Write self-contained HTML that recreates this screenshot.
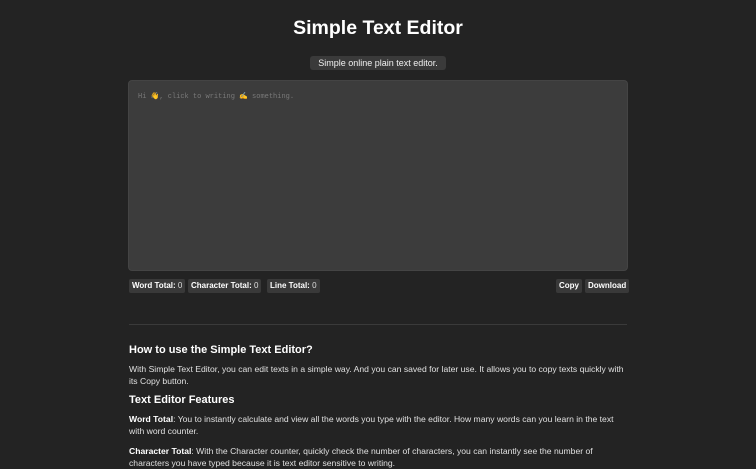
<!DOCTYPE html>
<html><head><style>
body{margin:0;background:#232323;color:#e6e6e6;font-family:"Liberation Sans",sans-serif;width:756px;height:462px;overflow:hidden;position:relative}
.a{position:absolute}
h1{position:absolute;top:17px;left:0;width:756px;text-align:center;margin:0;font-size:19.5px;font-weight:bold;color:#fff}
.sub{left:310px;top:56px;width:136px;height:14px;background:#3a3a3a;border-radius:3px;font-size:9px;text-align:center;line-height:14px;color:#f0f0f0}
.ta{left:129px;top:81px;width:498px;height:189px;background:#3c3c3c;border-radius:3px;box-shadow:0 0 0 1px #444}
.ph{left:138px;top:92px;font-family:"Liberation Mono",monospace;font-size:7px;color:#7a7a7a}
.b{top:279px;height:14px;background:#393939;border-radius:2px;font-size:8px;line-height:14px;padding:0 3px;color:#ddd}
.b b{color:#fff}
hr{position:absolute;top:324px;left:129px;width:498px;margin:0;border:0;border-top:1px solid #3a3a3a}
h3{position:absolute;margin:0;font-size:11px;color:#fff;left:129px}
p{position:absolute;margin:0;left:129px;width:500px;font-size:8.6px;line-height:12px;color:#e0e0e0}
p b{color:#fff}
</style></head><body>
<h1>Simple Text Editor</h1>
<div class="a sub">Simple online plain text editor.</div>
<div class="a ta"></div>
<div class="a ph">Hi 👋, click to writing ✍ something.</div>
<div class="a b" style="left:129px"><b>Word Total:</b> 0</div>
<div class="a b" style="left:188px"><b>Character Total:</b> 0</div>
<div class="a b" style="left:267px"><b>Line Total:</b> 0</div>
<div class="a b" style="left:556px"><b>Copy</b></div>
<div class="a b" style="left:585px"><b>Download</b></div>
<hr>
<h3 style="top:344px">How to use the Simple Text Editor?</h3>
<p style="top:363px">With Simple Text Editor, you can edit texts in a simple way. And you can saved for later use. It allows you to copy texts quickly with its Copy button.</p>
<h3 style="top:394px">Text Editor Features</h3>
<p style="top:413px"><b>Word Total</b>: You to instantly calculate and view all the words you type with the editor. How many words can you learn in the text with word counter.</p>
<p style="top:445px"><b>Character Total</b>: With the Character counter, quickly check the number of characters, you can instantly see the number of characters you have typed because it is text editor sensitive to writing.</p>
</body></html>
